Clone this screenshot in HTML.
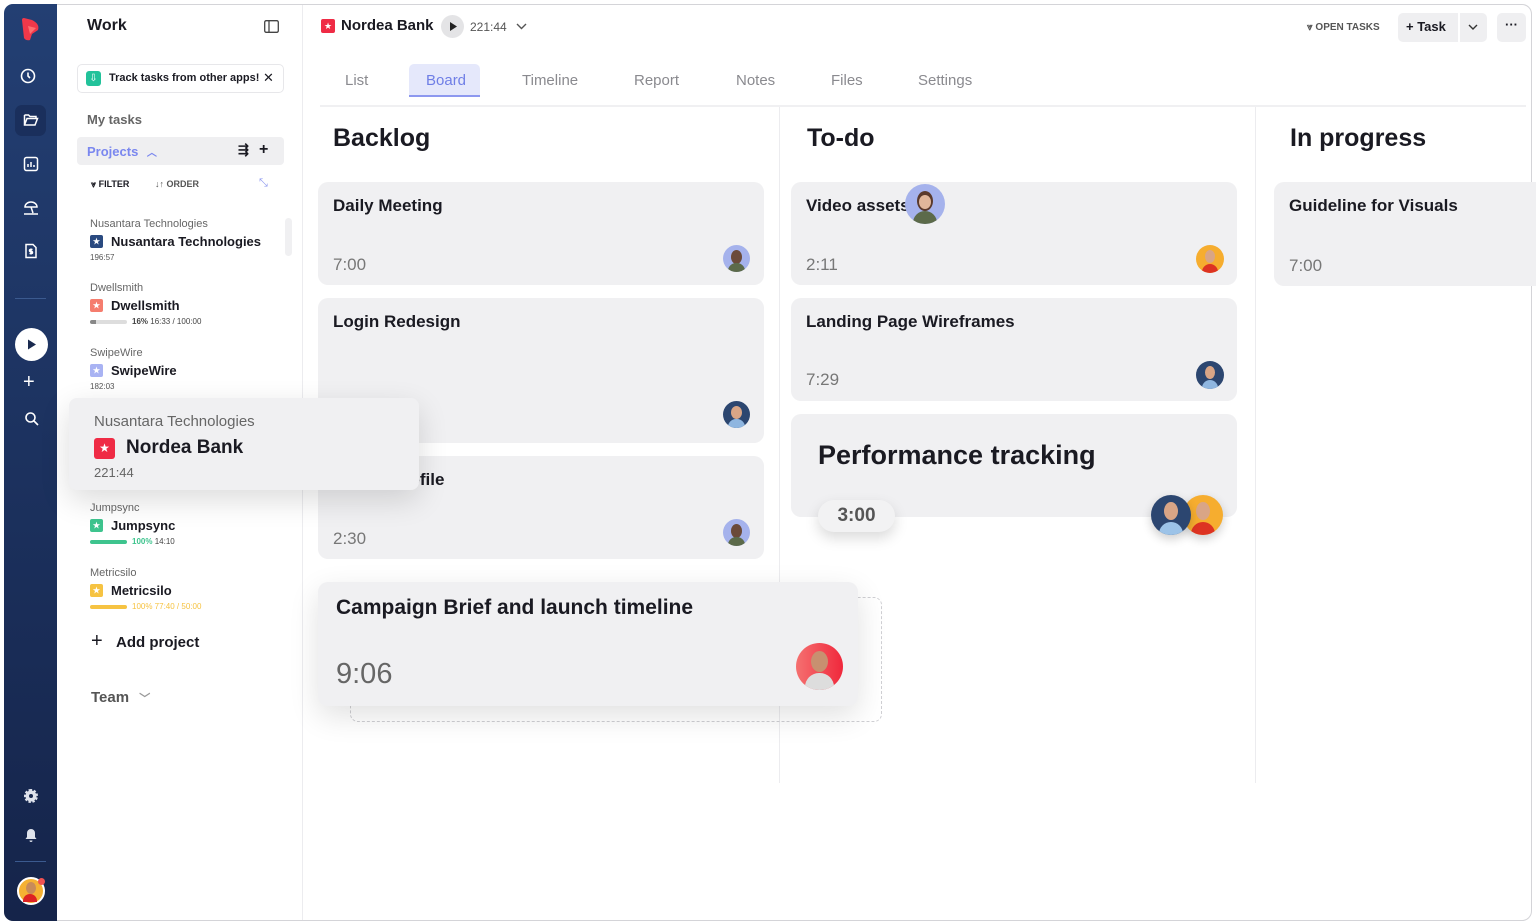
<!DOCTYPE html>
<html><head><meta charset="utf-8"><style>
*{box-sizing:border-box;margin:0;padding:0}
body{width:1536px;height:924px;background:#fff;font-family:"Liberation Sans",sans-serif;color:#1a1a22;position:relative;overflow:hidden}
.abs{position:absolute}
.frame{left:4px;top:4px;width:1528px;height:917px;border:1px solid #d4d4d8;border-radius:10px}
.nav{left:4px;top:4px;width:53px;height:917px;background:linear-gradient(#233f73,#15244a);border-radius:9px 0 0 9px}
.ic{position:absolute;left:20px;width:16px;height:16px}
.panel{left:57px;top:5px;width:246px;height:915px;border-right:1px solid #ececef}
.card{position:absolute;background:#f0f0f2;border-radius:10px}
.ct{position:absolute;left:15px;top:14px;font-size:17px;font-weight:bold;color:#1a1a22}
.tm{position:absolute;left:15px;font-size:17px;color:#777}
.av{position:absolute;border-radius:50%;overflow:hidden}
.tab{position:absolute;top:72px;font-size:15px;color:#8a8a8f}
.pi{position:absolute;left:90px}
.pi .s{font-size:11px;color:#666}
.pi .n{font-size:13px;font-weight:bold;margin-top:4px;display:flex;align-items:center}
.pi .n i{display:inline-block;width:13px;height:13px;border-radius:2px;margin-right:8px;color:#fff;font-size:8px;text-align:center;line-height:13px;font-style:normal}
.pi .m{font-size:8px;color:#444;margin-top:4px;display:flex;align-items:center}
.bar{display:inline-block;width:37px;height:4px;border-radius:2px;background:#ddd;margin-right:5px}
</style></head><body>
<div class="abs frame"></div>
<div class="abs nav"></div>
<!-- logo -->
<svg class="abs" style="left:18px;top:16px" width="26" height="26" viewBox="0 0 26 26"><path d="M4 4 Q4 2 6 2 L14 4 Q22 8 20 14 L14 18 L12 24 Q8 25 6 22 Z" fill="#f0384a"/><path d="M10 10 L18 12 L12 18 Z" fill="#ff7070"/></svg>
<svg class="ic" style="top:68px" viewBox="0 0 16 16" fill="none" stroke="#fff" stroke-width="1.6"><circle cx="8" cy="8" r="6.5"/><path d="M8 4.5V8l2 2"/></svg>
<div class="abs" style="left:15px;top:105px;width:31px;height:31px;background:#1a2f5c;border-radius:7px"></div>
<svg class="ic" style="top:112px;left:23px" viewBox="0 0 16 16" fill="none" stroke="#fff" stroke-width="1.5"><path d="M1.5 3h4l1.5 1.5h6v2M1.5 3v10h10.5l2.5-6.5H4L1.5 13"/></svg>
<svg class="ic" style="top:156px;left:23px" viewBox="0 0 16 16" fill="none" stroke="#fff" stroke-width="1.5"><rect x="1.5" y="1.5" width="13" height="13" rx="2"/><path d="M5 11V8M8 11V6M11 11V9"/></svg>
<svg class="ic" style="top:199px;left:23px" viewBox="0 0 16 16" fill="none" stroke="#fff" stroke-width="1.5"><path d="M2 8a6 5 0 0 1 12 0zM8 8l2 6M1 15h14"/></svg>
<svg class="ic" style="top:243px;left:23px" viewBox="0 0 16 16" fill="none" stroke="#fff" stroke-width="1.5"><path d="M3 1.5h7l3 3v10H3z"/><path d="M9.5 6.5h-2a1 1 0 0 0 0 2h1a1 1 0 0 1 0 2h-2M8 5.5v6"/></svg>
<div class="abs" style="left:15px;top:298px;width:31px;height:1px;background:#3b5a8f"></div>
<div class="abs" style="left:15px;top:328px;width:33px;height:33px;border-radius:50%;background:#fff"></div>
<svg class="abs" style="left:27px;top:339px" width="10" height="11" viewBox="0 0 10 11"><path d="M1 0.5L9 5.5 1 10.5z" fill="#1a2a4f"/></svg>
<div class="abs" style="left:23px;top:372px;color:#fff;font-size:20px;line-height:20px">+</div>
<svg class="ic" style="top:411px;left:24px" viewBox="0 0 16 16" fill="none" stroke="#fff" stroke-width="1.6"><circle cx="6.5" cy="6.5" r="4.5"/><path d="M10 10l4 4"/></svg>
<svg class="ic" style="top:788px;left:23px" viewBox="0 0 16 16"><path d="M8 2.5a5.5 5.5 0 1 0 0 11 5.5 5.5 0 0 0 0-11z" fill="#dfe3ec" stroke="#dfe3ec" stroke-width="3" stroke-dasharray="2.2 1.5"/><circle cx="8" cy="8" r="2" fill="#1a2a4f"/></svg>
<svg class="ic" style="top:827px;left:23px" viewBox="0 0 16 16" fill="#dfe3ec"><path d="M8 2a4 4 0 0 0-4 4v4l-1.5 2h11L12 10V6a4 4 0 0 0-4-4zM6.5 13.5h3a1.5 1.5 0 0 1-3 0z"/></svg>
<div class="abs" style="left:15px;top:861px;width:31px;height:1px;background:#3b5a8f"></div>
<div class="abs" style="left:17px;top:877px;width:28px;height:28px;border-radius:50%;background:#f5b133;border:2px solid #fff"></div>
<div class="abs" style="left:26px;top:882px;width:10px;height:12px;border-radius:50%;background:#c88b5a"></div>
<div class="abs" style="left:23px;top:894px;width:14px;height:8px;border-radius:7px 7px 0 0;background:#d22"></div>
<div class="abs" style="left:38px;top:878px;width:7px;height:7px;border-radius:50%;background:#f05252"></div>

<div class="abs panel"></div>
<div class="abs" style="left:87px;top:17px;font-size:16px;font-weight:bold">Work</div>
<svg class="abs" style="left:264px;top:20px" width="15" height="13" viewBox="0 0 15 13" fill="none" stroke="#444" stroke-width="1.3"><rect x="0.7" y="0.7" width="13.6" height="11.6" rx="1.5"/><path d="M5 1v11"/></svg>
<div class="abs" style="left:77px;top:64px;width:207px;height:29px;border:1px solid #e7e7ea;border-radius:5px"></div>
<div class="abs" style="left:86px;top:71px;width:15px;height:15px;border-radius:3px;background:#22c29a;color:#fff;font-size:10px;text-align:center;line-height:15px">⇩</div>
<div class="abs" style="left:109px;top:72px;font-size:11px;font-weight:bold">Track tasks from other apps!</div>
<div class="abs" style="left:263px;top:70px;font-size:13px">✕</div>
<div class="abs" style="left:87px;top:112px;font-size:13px;font-weight:bold;color:#666">My tasks</div>
<div class="abs" style="left:77px;top:137px;width:207px;height:28px;background:#efeff1;border-radius:4px"></div>
<div class="abs" style="left:87px;top:144px;font-size:13px;font-weight:bold;color:#7a87ef">Projects <span style="font-size:10px;margin-left:5px">︿</span></div>
<div class="abs" style="left:238px;top:142px;font-size:13px;font-weight:bold">⇶</div>
<div class="abs" style="left:259px;top:141px;font-size:16px;font-weight:bold">+</div>
<div class="abs" style="left:91px;top:179px;font-size:9px;font-weight:bold">⩔ FILTER</div>
<div class="abs" style="left:155px;top:179px;font-size:9px;font-weight:bold;color:#555">↓↑ ORDER</div>
<div class="abs" style="left:259px;top:177px;font-size:11px;color:#8a95ef">⤡</div>
<div class="abs" style="left:285px;top:218px;width:7px;height:38px;border-radius:4px;background:#f0f0f2"></div>

<div class="pi" style="top:218px"><div class="s">Nusantara Technologies</div><div class="n"><i style="background:#2a4a80">★</i>Nusantara Technologies</div><div class="m" style="color:#555">196:57</div></div>
<div class="pi" style="top:282px"><div class="s">Dwellsmith</div><div class="n"><i style="background:#f57d6e">★</i>Dwellsmith</div><div class="m"><span class="bar" style="background:linear-gradient(90deg,#888 16%,#ddd 16%)"></span><b>16%</b>&nbsp;16:33 / 100:00</div></div>
<div class="pi" style="top:347px"><div class="s">SwipeWire</div><div class="n"><i style="background:#a9b3f3">★</i>SwipeWire</div><div class="m" style="color:#555">182:03</div></div>
<div class="pi" style="top:502px"><div class="s">Jumpsync</div><div class="n"><i style="background:#3ec48e">★</i>Jumpsync</div><div class="m"><span class="bar" style="background:#3ec48e"></span><b style="color:#3ec48e">100%</b>&nbsp;14:10</div></div>
<div class="pi" style="top:567px"><div class="s">Metricsilo</div><div class="n"><i style="background:#f6c342">★</i>Metricsilo</div><div class="m" style="color:#f6c342"><span class="bar" style="background:#f6c342"></span>100% 77:40 / 50:00</div></div>
<div class="abs" style="left:91px;top:630px;font-size:20px">+</div>
<div class="abs" style="left:116px;top:634px;font-size:15px;font-weight:bold">Add project</div>
<div class="abs" style="left:91px;top:689px;font-size:15px;font-weight:bold;color:#555">Team <span style="font-size:11px;color:#999;margin-left:6px">﹀</span></div>

<!-- header -->
<div class="abs" style="left:321px;top:19px;width:14px;height:14px;background:#ef2b45;border-radius:2px;color:#fff;font-size:9px;text-align:center;line-height:14px">★</div>
<div class="abs" style="left:341px;top:17px;font-size:15px;font-weight:bold">Nordea Bank</div>
<div class="abs" style="left:441px;top:15px;width:23px;height:23px;border-radius:50%;background:#e4e4e6"></div>
<svg class="abs" style="left:450px;top:22px" width="7" height="9"><path d="M0 0L7 4.5 0 9z" fill="#222"/></svg>
<div class="abs" style="left:470px;top:20px;font-size:12px;color:#555">221:44</div>
<svg class="abs" style="left:516px;top:23px" width="11" height="7" fill="none" stroke="#555" stroke-width="1.4"><path d="M1 1l4.5 4.5L10 1"/></svg>
<div class="abs" style="left:1307px;top:22px;font-size:10px;font-weight:bold;color:#555">⩔ OPEN TASKS</div>
<div class="abs" style="left:1398px;top:13px;width:60px;height:29px;background:#efeff1;border-radius:5px 0 0 5px"></div>
<div class="abs" style="left:1406px;top:19px;font-size:13px;font-weight:bold">+ Task</div>
<div class="abs" style="left:1460px;top:13px;width:27px;height:29px;background:#efeff1;border-radius:0 5px 5px 0"></div>
<svg class="abs" style="left:1468px;top:24px" width="10" height="6" fill="none" stroke="#333" stroke-width="1.4"><path d="M1 1l4 4 4-4"/></svg>
<div class="abs" style="left:1497px;top:13px;width:29px;height:29px;background:#efeff1;border-radius:5px;text-align:center;font-size:13px;font-weight:bold;line-height:24px">···</div>

<div class="abs" style="left:409px;top:64px;width:71px;height:33px;background:#e5e8fb;border-radius:5px 5px 0 0;border-bottom:2px solid #8d98ef"></div>
<div class="tab" style="left:345px">List</div>
<div class="tab" style="left:426px;color:#6f7ee6">Board</div>
<div class="tab" style="left:522px">Timeline</div>
<div class="tab" style="left:634px">Report</div>
<div class="tab" style="left:736px">Notes</div>
<div class="tab" style="left:831px">Files</div>
<div class="tab" style="left:918px">Settings</div>
<div class="abs" style="left:320px;top:105px;width:1206px;height:2px;background:#f0f0f2"></div>
<div class="abs" style="left:779px;top:107px;width:1px;height:676px;background:#ececef"></div>
<div class="abs" style="left:1255px;top:107px;width:1px;height:676px;background:#ececef"></div>

<div class="abs" style="left:333px;top:124px;font-size:25px;font-weight:bold">Backlog</div>
<div class="abs" style="left:807px;top:124px;font-size:25px;font-weight:bold">To-do</div>
<div class="abs" style="left:1290px;top:124px;font-size:25px;font-weight:bold">In progress</div>

<div class="card" style="left:318px;top:182px;width:446px;height:103px"><div class="ct">Daily Meeting</div><div class="tm" style="top:73px">7:00</div></div>
<div class="card" style="left:318px;top:298px;width:446px;height:145px"><div class="ct">Login Redesign</div></div>
<div class="card" style="left:318px;top:456px;width:446px;height:103px"><div class="ct">Mobile Profile</div><div class="tm" style="top:73px">2:30</div></div>
<div class="card" style="left:791px;top:182px;width:446px;height:103px"><div class="ct">Video assets</div><div class="tm" style="top:73px">2:11</div></div>
<div class="card" style="left:791px;top:298px;width:446px;height:103px"><div class="ct">Landing Page Wireframes</div><div class="tm" style="top:72px">7:29</div></div>
<div class="card" style="left:791px;top:414px;width:446px;height:103px"><div style="position:absolute;left:27px;top:26px;font-size:27px;font-weight:bold">Performance tracking</div></div>
<div class="card" style="left:1274px;top:182px;width:262px;height:104px;border-radius:10px 0 0 10px"><div class="ct">Guideline for Visuals</div><div class="tm" style="top:74px">7:00</div></div>

<!-- avatars -->
<div class="av" style="left:723px;top:245px;width:27px;height:27px;background:#a5b2ec"><div class="abs" style="left:8px;top:5px;width:11px;height:14px;border-radius:50%;background:#6b4a3a"></div><div class="abs" style="left:5px;top:18px;width:17px;height:10px;border-radius:8px 8px 0 0;background:#5c6a4a"></div></div>
<div class="av" style="left:723px;top:401px;width:27px;height:27px;background:#2c4670"><div class="abs" style="left:8px;top:5px;width:11px;height:13px;border-radius:50%;background:#d9a586"></div><div class="abs" style="left:5px;top:18px;width:17px;height:10px;border-radius:8px 8px 0 0;background:#8fb6e0"></div></div>
<div class="av" style="left:723px;top:519px;width:27px;height:27px;background:#a5b2ec"><div class="abs" style="left:8px;top:5px;width:11px;height:14px;border-radius:50%;background:#6b4a3a"></div><div class="abs" style="left:5px;top:18px;width:17px;height:10px;border-radius:8px 8px 0 0;background:#5c6a4a"></div></div>
<div class="av" style="left:905px;top:184px;width:40px;height:40px;background:#a5b2ec"><div class="abs" style="left:12px;top:7px;width:16px;height:20px;border-radius:50%;background:#5a3a2c"></div><div class="abs" style="left:14px;top:11px;width:12px;height:14px;border-radius:50%;background:#e0b69a"></div><div class="abs" style="left:8px;top:27px;width:24px;height:14px;border-radius:12px 12px 0 0;background:#5c6a4a"></div></div>
<div class="av" style="left:1196px;top:245px;width:28px;height:28px;background:#f6ad2f"><div class="abs" style="left:9px;top:5px;width:10px;height:13px;border-radius:50%;background:#d9a586"></div><div class="abs" style="left:6px;top:19px;width:16px;height:9px;border-radius:8px 8px 0 0;background:#d32"></div></div>
<div class="av" style="left:1196px;top:361px;width:28px;height:28px;background:#2c4670"><div class="abs" style="left:9px;top:5px;width:10px;height:13px;border-radius:50%;background:#d9a586"></div><div class="abs" style="left:6px;top:19px;width:16px;height:9px;border-radius:8px 8px 0 0;background:#8fb6e0"></div></div>
<div class="av" style="left:1183px;top:495px;width:40px;height:40px;background:#f6ad2f;box-shadow:0 4px 10px rgba(0,0,0,.2)"><div class="abs" style="left:13px;top:7px;width:14px;height:18px;border-radius:50%;background:#d9a586"></div><div class="abs" style="left:8px;top:27px;width:24px;height:14px;border-radius:12px 12px 0 0;background:#d32"></div></div>
<div class="av" style="left:1151px;top:495px;width:40px;height:40px;background:#2c4670;box-shadow:0 4px 10px rgba(0,0,0,.2)"><div class="abs" style="left:13px;top:7px;width:14px;height:18px;border-radius:50%;background:#d9a586"></div><div class="abs" style="left:8px;top:27px;width:24px;height:14px;border-radius:12px 12px 0 0;background:#9cc3e8"></div></div>
<div class="abs" style="left:818px;top:500px;width:77px;height:32px;border-radius:16px;background:#f2f2f3;box-shadow:0 6px 14px rgba(0,0,0,.15);font-size:19px;font-weight:bold;color:#555;text-align:center;line-height:32px">3:00</div>

<!-- campaign drag -->
<div class="abs" style="left:350px;top:597px;width:532px;height:125px;border:1.5px dashed #cfcfd3;border-radius:8px"></div>
<div class="card" style="left:318px;top:582px;width:540px;height:124px;box-shadow:0 10px 30px rgba(0,0,0,.12)"><div style="position:absolute;left:18px;top:14px;font-size:21px;font-weight:bold">Campaign Brief and launch timeline</div><div style="position:absolute;left:18px;top:76px;font-size:29px;color:#666">9:06</div></div>
<div class="av" style="left:796px;top:643px;width:47px;height:47px;background:linear-gradient(90deg,#f57070,#f0283c)"><div class="abs" style="left:15px;top:8px;width:17px;height:21px;border-radius:50%;background:#c89070"></div><div class="abs" style="left:9px;top:30px;width:29px;height:18px;border-radius:14px 14px 0 0;background:#ddd"></div></div>

<!-- overlay dragging project -->
<div class="abs" style="left:69px;top:398px;width:350px;height:92px;background:#f0f0f2;border-radius:8px;box-shadow:0 10px 30px rgba(0,0,0,.14)"></div>
<div class="abs" style="left:94px;top:413px;font-size:15px;color:#666">Nusantara Technologies</div>
<div class="abs" style="left:94px;top:438px;width:21px;height:21px;background:#ef2b45;border-radius:3px;color:#fff;font-size:12px;text-align:center;line-height:21px">★</div>
<div class="abs" style="left:126px;top:437px;font-size:19px;font-weight:bold">Nordea Bank</div>
<div class="abs" style="left:94px;top:465px;font-size:13px;color:#666">221:44</div>
</body></html>
